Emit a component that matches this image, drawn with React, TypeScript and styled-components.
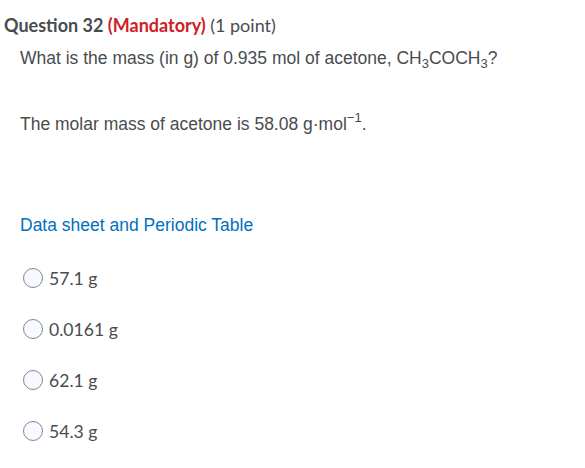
import styled, { createGlobalStyle } from "styled-components";

const GlobalStyle = createGlobalStyle`
  body {
    margin: 0;
    background: #fff;
  }
`;

const options = ["57.1 g", "0.0161 g", "62.1 g", "54.3 g"];

const App = () => {
  return (
    <SPage>
      <GlobalStyle />
      <STitle>
        Question 32 <SMandatory>(Mandatory)</SMandatory> <SPoints>(1 point)</SPoints>
      </STitle>
      <SBody>
        <SText>
          What is the mass (in g) of 0.935 mol of acetone, CH<sub>3</sub>COCH<sub>3</sub>?
        </SText>
        <SText>
          The molar mass of acetone is 58.08 g·mol<sup>−1</sup>.
        </SText>
        <SLink href="#">Data sheet and Periodic Table</SLink>
        <SOptions>
          {options.map((o) => (
            <SOption key={o}>
              <SRadio type="radio" name="q32" />
              <span>{o}</span>
            </SOption>
          ))}
        </SOptions>
      </SBody>
    </SPage>
  );
};

const SPage = styled.div`
  padding: 13px 4px 0;
`;

const STitle = styled.h2`
  margin: 0;
  font-family: Lato, sans-serif;
  font-size: 18px;
  font-weight: bold;
  line-height: 24px;
  color: #494c4e;
`;

const SMandatory = styled.span`
  color: #cd2026;
`;

const SPoints = styled.span`
  font-weight: normal;
`;

const SBody = styled.div`
  padding: 9px 0 0 16px;
  font-family: "Liberation Sans", Arial, sans-serif;
  font-size: 17.5px;
  color: #494c4e;
`;

const SText = styled.p`
  margin: 0 0 42px;
  line-height: 24px;

  sub {
    font-size: 13px;
    vertical-align: -4px;
    line-height: 0;
  }

  sup {
    font-size: 13px;
    vertical-align: 8px;
    line-height: 0;
  }
`;

const SLink = styled.a`
  display: block;
  margin-top: 77px;
  line-height: 24px;
  color: #006fbf;
  text-decoration: none;
`;

const SOptions = styled.div`
  display: flex;
  flex-direction: column;
  gap: 31px;
  margin-top: 31px;
`;

const SOption = styled.label`
  display: flex;
  align-items: center;
  gap: 6px;
  height: 20px;
  padding-left: 3px;
  font-family: Lato, sans-serif;
  font-size: 17.6px;
  color: #494c4e;
`;

const SRadio = styled.input`
  appearance: none;
  margin: 0;
  width: 20px;
  height: 20px;
  border: 1px solid #868686;
  border-radius: 50%;
  background: #f6f9ff;
`;

export default App;
